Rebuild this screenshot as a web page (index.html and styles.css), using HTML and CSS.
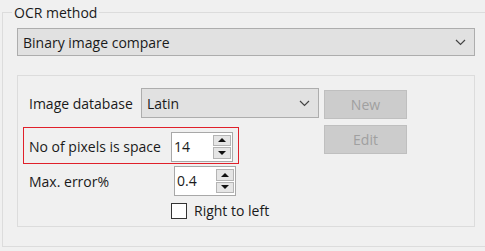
FILE: index.html
```html
<!DOCTYPE html>
<html lang="en">

<head>
  <meta charset="UTF-8">
  <title>OCR method</title>
  <link rel="stylesheet" href="styles.css">
</head>

<body>
  <div class="group">
    <div class="group__legend">OCR method</div>

    <div class="combo combo--wide">
      <span>Binary image compare</span>
      <svg class="chevron" width="11" height="7" viewBox="0 0 11 7"><path d="M1 1l4.5 4.5L10 1" /></svg>
    </div>

    <div class="panel">
      <div class="fields">
        <div class="row row--db">
          <span class="label label--db">Image database</span>
          <div class="combo combo--db">
            <span>Latin</span>
            <svg class="chevron" width="11" height="7" viewBox="0 0 11 7"><path d="M1 1l4.5 4.5L10 1" /></svg>
          </div>
        </div>

        <div class="row row--focus">
          <span class="label label--space">No of pixels is space</span>
          <div class="spin">
            <span class="spin__value">14</span>
            <div class="spin__buttons">
              <span class="spin__btn"><i class="tri tri--up"></i></span>
              <span class="spin__btn"><i class="tri tri--down"></i></span>
            </div>
          </div>
        </div>

        <div class="row row--err">
          <span class="label label--err">Max. error%</span>
          <div class="spin">
            <span class="spin__value">0.4</span>
            <div class="spin__buttons">
              <span class="spin__btn"><i class="tri tri--up"></i></span>
              <span class="spin__btn"><i class="tri tri--down"></i></span>
            </div>
          </div>
        </div>

        <label class="check">
          <span class="check__box"></span>
          Right to left
        </label>
      </div>

      <div class="buttons">
        <button disabled>New</button>
        <button disabled>Edit</button>
      </div>
    </div>
  </div>
</body>

</html>
```

FILE: styles.css
```css
* {
  box-sizing: border-box;
}

body {
  margin: 0;
  background: #f0f0f0;
  font-family: 'Open Sans', 'Noto Sans', sans-serif;
  font-size: 14px;
  color: #1a1a1a;
  overflow: hidden;
}

.group {
  margin: 12px -20px 0 2px;
  height: 235px;
  border: 1px solid #dcdcdc;
  padding: 0 0 0 14px;
}

.group__legend {
  width: fit-content;
  margin: -10px 0 0 -5px;
  padding: 0 2px;
  line-height: 20px;
  background: #f0f0f0;
}

.combo {
  display: flex;
  align-items: center;
  justify-content: space-between;
  border: 1px solid #adadad;
  background: #e1e1e1;
  padding: 0 8px 0 5px;
}

.combo--wide {
  margin-top: 5px;
  width: 458px;
  height: 28px;
}

.combo--db {
  width: 178px;
  height: 30px;
  padding-left: 5px;
}

.chevron path {
  fill: none;
  stroke: #444;
  stroke-width: 1.2;
}

.panel {
  display: flex;
  gap: 5px;
  margin-top: 19px;
  width: 458px;
  height: 152px;
  border: 1px solid #dcdcdc;
  padding: 12px 0 0 5px;
}

.fields {
  display: flex;
  flex-direction: column;
  width: 296px;
}

.row {
  display: flex;
  align-items: center;
}

.label {
  padding-left: 6px;
  flex-shrink: 0;
}

.label--db {
  width: 118px;
}

.label--space {
  width: 147px;
}

.label--err {
  width: 151px;
}

.row--focus {
  margin-top: 9px;
  width: 216px;
  height: 37px;
  border: 1px solid #e0202a;
  padding: 3px 0 1px 0;
}

.row--focus .label {
  padding-left: 5px;
}

.row--err {
  margin-top: 2px;
}

.spin {
  display: flex;
  width: 62px;
  height: 30px;
  border: 1px solid #a8a8a8;
  background: #fff;
  padding: 2px 1px 2px 2px;
}

.spin__value {
  flex: 1;
  line-height: 24px;
}

.spin__buttons {
  display: flex;
  flex-direction: column;
  gap: 1px;
  width: 18px;
}

.spin__btn {
  flex: 1;
  display: flex;
  align-items: center;
  justify-content: center;
  background: #e5e5e5;
  border: 1px solid #b4b4b4;
}

.tri {
  width: 0;
  height: 0;
  border-left: 4px solid transparent;
  border-right: 4px solid transparent;
}

.tri--up {
  border-bottom: 4px solid #111;
}

.tri--down {
  border-top: 4px solid #111;
}

.check {
  display: flex;
  align-items: center;
  gap: 7px;
  margin: 5px 0 0 148px;
}

.check__box {
  width: 16px;
  height: 16px;
  border: 1px solid #333;
  background: #fff;
}

.buttons {
  display: flex;
  flex-direction: column;
  gap: 6px;
  padding-top: 2px;
}

button {
  width: 83px;
  height: 29px;
  font: inherit;
  color: #a0a0a0;
  background: #cccccc;
  border: 1px solid #bfbfbf;
  padding: 0;
}
```
